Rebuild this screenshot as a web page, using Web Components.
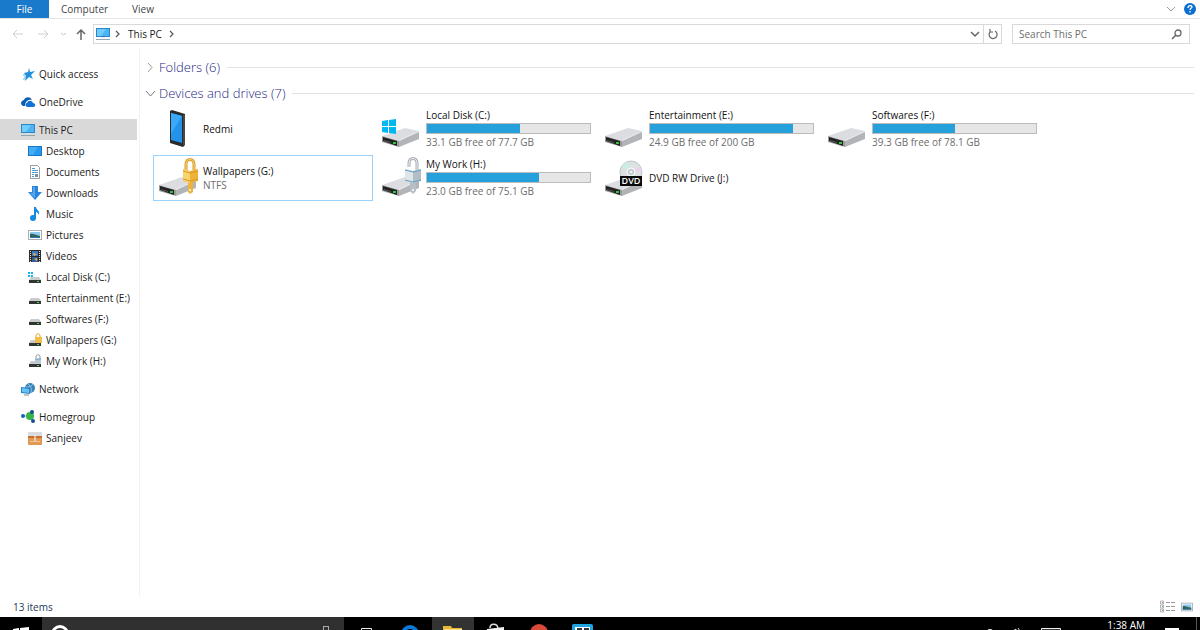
<!DOCTYPE html>
<html lang="en">
<head>
<meta charset="utf-8">
<title>This PC</title>
<style>
  body {
    margin: 0;
    font-family: "Open Sans", "Noto Sans", sans-serif;
    font-size: 10px;
    line-height: 14px;
    color: #1a1a1a;
    background: #fff;
  }
</style>
</head>
<body>
<file-explorer></file-explorer>

<script>
const drive = `
  <path d="M0 27 23 19 37 22 17 32z" fill="#dcdde0"/>
  <path d="M17 32 37 22v8L17 38z" fill="#b2b4b8"/>
  <path d="M17 31 37 22v1L17 32z" fill="#ececee"/>
  <path d="M0 27 17 32v6L0 33z" fill="#9a9b9e"/>
  <path d="M1 28 15 32v5L1 32z" fill="#222"/>
  <path d="M2 31 9 33v1L2 32z" fill="#555"/>
  <path d="M11 33h3v2h-3z" fill="#2fc43a"/>`;

const miniDrive = `
  <path d="M3 7h8l2 3H1z" fill="#c9cacd"/>
  <path d="M1 10h12v3H1z" fill="#333"/>
  <path d="M9 11h2v1H9z" fill="#3be04a"/>`;

const monitor = `
  <path d="M0 1h14v9H0z" fill="#2a86c8"/>
  <path d="M1 2h12v7H1z" fill="#4cb4f2"/>
  <path d="M1 2h9L5 9H1z" fill="#72ccfb"/>
  <path d="M5 10h4v1H5z" fill="#dfe6ea"/>
  <path d="M0 12h14v1H0z" fill="#8fa5b2"/>`;

const picture = `
  <path d="M0 2h14v10H0z" fill="#a9aeb3"/>
  <path d="M1 3h12v8H1z" fill="#fff"/>
  <path d="M2 4h10v6H2z" fill="#8cc8f0"/>
  <path d="M2 6c3-1 5 1 10 2v2H2z" fill="#2e6658"/>
  <path d="M2 9h10v1H2z" fill="#2f6eaa"/>`;

// [width, height, markup]
const icons = {
  drive: [38, 40, drive],
  system: [38, 40, drive + `
    <path d="M0 12 6 11v6H0zM7 11l7-1v7H7zM0 18h6v6l-6-1zM7 18h7v7l-7-1z" fill="#00b7f1"/>`],
  locked: [38, 40, drive + `
    <path d="M27 12V6c0-6 8-6 8 0v6" fill="none" stroke="#d99e2b" stroke-width="3"/>
    <path d="M27 12V6c0-6 8-6 8 0v6" fill="none" stroke="#fbd770" stroke-width="1"/>
    <path d="M29 23h5v11l-3 2-2-2z" fill="#edb33e"/><circle cx="31" cy="32" r="1" fill="#fff"/>
    <path d="M24 11l7 2 8-2v12l-8 2-7-2z" fill="#eeb236"/>
    <path d="M24 11l7 2v12l-7-2z" fill="#fbd36b"/>
    <path d="M24 13l7 2 8-2M24 21l7 2 8-2" fill="none" stroke="#d09a30"/>`],
  unlocked: [38, 40, drive + `
    <path d="M27 9V5c0-6 8-6 8 0v7" fill="none" stroke="#a5adb3" stroke-width="3"/>
    <path d="M27 9V5c0-6 8-6 8 0v7" fill="none" stroke="#eef1f3" stroke-width="1"/>
    <path d="M28 23h6v10l-3 3-3-3z" fill="#b6bfc6"/><circle cx="31" cy="32" r="1" fill="#fff"/>
    <path d="M23 11l8 2 8-2v12l-8 2-8-2z" fill="#b3bdc5"/>
    <path d="M23 11l8 2v12l-8-2z" fill="#dfe5e9"/>
    <path d="M23 12l8 2 8-2M23 22l8 2 8-2" fill="none" stroke="#5e9fc9"/>`],
  dvd: [38, 40, drive + `
    <circle cx="26" cy="14" r="11" fill="#dde1e2" stroke="#bfc5c7"/>
    <path d="M26 14 17 8a11 11 0 0 1 5-4z" fill="#c6efe0"/>
    <path d="M26 14 36 9a11 11 0 0 1 1 5z" fill="#e8d2ee"/>
    <circle cx="26" cy="14" r="4" fill="#c9cfd1" stroke="#fff"/><circle cx="26" cy="14" r="1" fill="#fff"/>
    <path d="M15 18h22v10H15z" fill="#0b0b0b"/>
    <text x="26" y="26" text-anchor="middle" font-size="9" font-weight="600" fill="#fff">DVD</text>`],
  phone: [38, 40, `
    <path d="M11 2 13 1 26 5v31l-2 2-13-4z" fill="#2b2b2b"/>
    <path d="M12 4 23 7v27l-11-3z" fill="#2292ea"/>
    <path d="M12 4 23 7 12 25z" fill="#3aa9f8"/>
    <path d="M25 6v30" stroke="#666"/>`],
  star: [14, 14, `
    <path d="M8 1 9 5l5-1-4 4 2 4-4-2-4 4 1-5-2-3 4-1z" fill="#1f8fe0"/>
    <path d="M2 8h2M3 10h2M2 12h2" stroke="#63b4ee"/>`],
  cloud: [14, 14, `
    <path d="M2 11a3 3 0 0 1-1-5c1-1 2-1 2-1 1-3 6-4 8 0-4-1-7 2-7 6z" fill="#0c5cb5"/>
    <path d="M6 12c-2-1-2-4 0-4 1-3 5-3 6 0 3 0 3 4 0 4z" fill="#1272d3"/>`],
  monitor: [14, 14, monitor],
  desktop: [14, 14, `<path d="M0 2h14v10H0z" fill="#1476c4"/><path d="M1 3h12v8H1z" fill="#2499ee"/><path d="M1 3h9L5 11H1z" fill="#42adf6"/>`],
  document: [14, 14, `
    <path d="M2.500.5h7l2 2v11h-9z" fill="#fff" stroke="#9a9fa3"/>
    <path d="M4 3.500h3M4 5.500h6M4 7.500h6M4 9.500h2M4 11.500h2" stroke="#4b9ad3"/><path d="M7 9h3v3H7z" fill="#7b8d99"/>`],
  download: [14, 14, `<path d="M4 0h6v6h4l-7 8-7-8h4z" fill="#2b86d9"/><path d="M5 1h2v11L2 7h3z" fill="#56a7ed"/>`],
  music: [14, 14, `<ellipse cx="5" cy="11" rx="3" ry="3" fill="#148ae2"/><path d="M6 0h2c0 3 4 3 3 8-1-2-2-3-3-3v6H6z" fill="#148ae2"/>`],
  picture: [14, 14, picture],
  video: [14, 14, `
    <path d="M1 1h12v12H1z" fill="#2b2b2b"/><path d="M4 2h6v5H4z" fill="#3b79c2"/><path d="M4 8h6v5H4z" fill="#315f94"/>
    <path d="M5 4l4 1-3 2zM6 10l3-1v3z" fill="#efb13f"/>
    <path d="M2.500 2v11M11.500 2v11" stroke="#ddd" stroke-dasharray="1 1"/>`],
  miniDrive: [14, 14, miniDrive],
  miniSystem: [14, 14, miniDrive + `<path d="M0 2h2v2H0zM3 2h2v2H3zM0 5h2v2H0zM3 5h2v2H3z" fill="#19b4ee"/>`],
  miniLocked: [14, 14, miniDrive + `<path d="M8 5V3c0-3 4-3 4 0v2" fill="none" stroke="#d9a02e"/><path d="M7 4h7v6H7z" fill="#f1bd48"/>`],
  miniUnlocked: [14, 14, miniDrive + `<path d="M8 4V3c0-3 4-3 4 0v2" fill="none" stroke="#8b959c"/><path d="M7 5h6v4H7z" fill="#b9c9d4"/><path d="M7 5h6" stroke="#5e9fc9"/>`],
  network: [14, 14, `
    <circle cx="9" cy="6" r="5" fill="#3a83b8"/><path d="M7 2c3 2 4 5 3 8M12 2c-1 2-3 3-7 3" stroke="#8cc4e6" fill="none"/>
    <path d="M0 5l9 1v6l-9-1z" fill="#2c83c4"/><path d="M1 6l7 1v4l-7-1z" fill="#63c2f6"/><path d="M3 13h5" stroke="#889"/>`],
  homegroup: [14, 14, `
    <path d="M2 6h7M9 6l2-4M9 6l2 5" stroke="#9ab"/>
    <circle cx="9" cy="6" r="4" fill="#37b34a"/><circle cx="2" cy="6" r="2" fill="#1467b3"/>
    <circle cx="11" cy="2" r="2" fill="#174f8c"/><circle cx="12" cy="11" r="2" fill="#174f8c"/>`],
  user: [14, 14, `
    <path d="M0 1h14v13H0z" fill="#e19a55"/><path d="M0 1h14v5H0z" fill="#d9dde1"/><path d="M0 5h14v2H0z" fill="#c5702c"/>
    <path d="M7 4v6" stroke="#fff"/><path d="M2 10h10v1H2z" fill="#f3c795"/>`],
  back: [11, 10, `<path d="M5 1 1 5l4 4M1 5h10" fill="none" stroke="#cfcfcf"/>`],
  forward: [11, 10, `<path d="M6 1l4 4-4 4M10 5H0" fill="none" stroke="#cfcfcf"/>`],
  up: [10, 11, `<path d="M1 5l4-4 4 4M5 1v10" fill="none" stroke="#666" stroke-width="1.500"/>`],
  history: [5, 4, `<path d="M0 1l2.500 2L5 1" fill="none" stroke="#c4c4c4"/>`],
  chevronDown: [8, 6, `<path d="M0 1l4 4 4-4" fill="none" stroke="#999"/>`],
  dropDown: [8, 6, `<path d="M0 1l4 4 4-4" fill="none" stroke="#666" stroke-width="1.500"/>`],
  crumb: [4, 6, `<path d="M0 0l3 3-3 3" fill="none" stroke="#555" stroke-width="1.200"/>`],
  expanded: [9, 9, `<path d="M0 2l4.500 5L9 2" fill="none" stroke="#777"/>`],
  collapsed: [9, 9, `<path d="M2 0l4 4.500L2 9" fill="none" stroke="#999"/>`],
  refresh: [10, 10, `<path d="M7 2a4 4 0 1 1-5 1M2 0v3h3" fill="none" stroke="#666" stroke-width="1.200"/>`],
  search: [10, 10, `<circle cx="6" cy="4" r="3" fill="none" stroke="#666" stroke-width="1.300"/><path d="M4 6 0 10" stroke="#666" stroke-width="1.600"/>`],
  help: [12, 12, `<circle cx="6" cy="6" r="6" fill="#0a6fd0"/><path d="M4 5c0-3 4-3 4-1 0 1-2 1-2 3M6 8v1.500" fill="none" stroke="#fff" stroke-width="1.300"/>`],
  details: [15, 13, `
    <path d="M.5 1h3v3h-3zM.5 5h3v3h-3zM.5 9h3v3h-3z" fill="#fff" stroke="#b4b4b4"/>
    <path d="M2 2h1v1H2z" fill="#c66"/><path d="M2 6h1v1H2z" fill="#6a6"/><path d="M2 10h1v1H2z" fill="#c66"/>
    <path d="M6 2.500h4M11 2.500h4M6 6.500h4M11 6.500h4M6 10.500h4M11 10.500h4" stroke="#999"/>`],
  windows: [16, 16, `<path d="M0 2 6 1v7H0zM7 1l9-1v8H7zM0 9h6v6l-6-1zM7 9h9v7l-9-1z" fill="#fff"/>`],
  cortana: [18, 18, `<circle cx="9" cy="9" r="7.500" fill="none" stroke="#fff" stroke-width="3"/>`],
  mic: [8, 14, `<rect x="1.500" y="1.500" width="5" height="9" fill="none" stroke="#aaa"/>`],
  taskView: [12, 12, `<path d="M.5 1.500h10v9H.5z" fill="none" stroke="#eee"/>`],
  edge: [18, 18, `<circle cx="9" cy="10" r="7" fill="none" stroke="#0c78d6" stroke-width="4"/>`],
  folder: [20, 18, `<path d="M0 2h8l1 2h10v14H0z" fill="#e9b738"/><path d="M1 5h18v13H1z" fill="#fae08b"/>`],
  store: [18, 18, `<path d="M3 4c0-5 7-5 8 0" fill="none" stroke="#ddd" stroke-width="1.500"/><path d="M0 5 17 3v15H0z" fill="#f2f2f2"/>`],
  record: [18, 18, `<circle cx="9" cy="9" r="9" fill="#d9493c"/>`],
  app: [21, 18, `<rect width="21" height="20" rx="2" fill="#1ea5df"/><path d="M3 3h15v15H3z" fill="#fff"/><path d="M5 4h5v4H5zM12 4h5v4h-5z" fill="#333"/>`],
  people: [6, 8, `<circle cx="3" cy="4" r="3" fill="#eee"/>`],
  battery: [21, 10, `<path d="M.5.5h19v9H.5z" fill="#333" stroke="#eee"/>`],
  notice: [14, 12, `<path d="M0 0h14v10H0z" fill="#fff"/>`],
  sound: [8, 8, `<path d="M5 0l2 3M0 3l3-2v6z" stroke="#ccc" fill="#ccc"/>`]
};

function define(name, markup, setup) {
  const template = document.createElement("template");
  template.innerHTML = markup;
  customElements.define(name, class extends HTMLElement {
    constructor() {
      super();
      this.attachShadow({ mode: "open" });
      this.shadowRoot.appendChild(template.content.cloneNode(true));
    }

    connectedCallback() {
      if (setup) setup(this, this.shadowRoot);
    }
  });
}

function addIcon(el, root) {
  const icon = document.createElement("app-icon");
  icon.setAttribute("name", el.getAttribute("icon"));
  root.querySelector("a").prepend(icon);
}

define("app-icon", `
  <style>
    :host { display: block; flex: none; line-height: 0; }
    svg { display: block; overflow: visible; }
  </style>
`, (el, root) => {
  const [w, h, art] = icons[el.getAttribute("name")];
  const size = Number(el.getAttribute("width")) || w;
  root.innerHTML += `<svg width="${size}" height="${Math.round(h * size / w)}" viewBox="0 0 ${w} ${h}" aria-hidden="true">${art}</svg>`;
});

define("ribbon-tabs", `
  <style>
    :host { display: flex; align-items: center; height: 18px; flex: none; border-bottom: 1px solid #e4e5e6; }
    button { border: 0; background: none; font: inherit; color: #444; height: 18px; padding: 0 12px; }
    .file { background: #1979ca; color: #fff; width: 49px; }
    .end { margin-left: auto; display: flex; align-items: center; gap: 9px; padding-right: 4px; }
    .end button { padding: 0; }
  </style>
  <button class="file">File</button>
  <button>Computer</button>
  <button>View</button>
  <div class="end">
    <button aria-label="Expand the ribbon"><app-icon name="chevronDown"></app-icon></button>
    <button aria-label="Help"><app-icon name="help"></app-icon></button>
  </div>
`);

define("address-bar", `
  <style>
    :host { display: flex; align-items: center; flex: none; height: 30px; padding: 0 10px 0 12px; }
    button { border: 0; background: none; padding: 0; font: inherit; color: inherit; }
    .nav { display: flex; align-items: center; gap: 15px; width: 81px; }
    .nav button:nth-child(3) { margin: 0 -5px 0 -3px; }
    .path, .search { box-sizing: border-box; height: 20px; border: 1px solid #d9d9d9; display: flex; align-items: center; }
    .path { flex: 1; padding-left: 2px; }
    .crumbs { display: flex; align-items: center; gap: 8px; margin-left: 6px; }
    .drop { margin-left: auto; padding-right: 4px; }
    .refresh { border-left: 1px solid #d9d9d9; width: 18px; height: 18px; display: grid; place-items: center; }
    .search { width: 178px; margin-left: 10px; padding: 0 7px 0 6px; }
    input { flex: 1; min-width: 0; border: 0; outline: 0; padding: 0; font: inherit; background: none; }
    input::placeholder { color: #6d6d6d; opacity: 1; }
  </style>
  <div class="nav">
    <button aria-label="Back"><app-icon name="back"></app-icon></button>
    <button aria-label="Forward"><app-icon name="forward"></app-icon></button>
    <button aria-label="Recent locations"><app-icon name="history"></app-icon></button>
    <button aria-label="Up"><app-icon name="up"></app-icon></button>
  </div>
  <div class="path">
    <app-icon name="monitor"></app-icon>
    <div class="crumbs">
      <app-icon name="crumb"></app-icon>
      <button><slot></slot></button>
      <app-icon name="crumb"></app-icon>
    </div>
    <button class="drop" aria-label="Previous locations"><app-icon name="dropDown"></app-icon></button>
    <button class="refresh" aria-label="Refresh"><app-icon name="refresh"></app-icon></button>
  </div>
  <div class="search">
    <input type="search" placeholder="Search This PC" aria-label="Search This PC">
    <app-icon name="search"></app-icon>
  </div>
`);

define("nav-item", `
  <style>
    :host { display: block; }
    :host([top]) { margin-top: 7px; }
    a { display: flex; align-items: center; gap: 4px; height: 21px; padding-left: 28px; color: inherit; text-decoration: none; white-space: nowrap; }
    :host([top]) a { padding-left: 21px; }
    :host([current]) a { background: #d9d9d9; }
  </style>
  <a href="#"><span><slot></slot></span></a>
`, addIcon);

define("nav-pane", `
  <style>
    :host { display: block; box-sizing: border-box; width: 140px; flex: none; padding: 7px 2px 0 0; border-right: 1px solid #f2f2f2; }
  </style>
  <nav><slot></slot></nav>
`);

define("item-group", `
  <style>
    :host { display: block; }
    button { display: flex; align-items: center; gap: 4px; width: 100%; height: 26px; padding: 0; border: 0; background: none;
      font: inherit; font-size: 13px; font-weight: 300; color: #1e287f; white-space: nowrap; }
    button::after { content: ""; flex: 1; height: 1px; margin-left: 3px; background: #e2e2e2; }
    .items { display: grid; grid-template-columns: repeat(auto-fill, 220px); gap: 3px; padding-left: 7px; }
    :host([collapsed]) .items { display: none; }
  </style>
  <button></button>
  <div class="items"><slot></slot></div>
`, (el, root) => {
  const closed = el.hasAttribute("collapsed");
  const head = root.querySelector("button");
  head.setAttribute("aria-expanded", !closed);
  head.innerHTML = `<app-icon name="${closed ? "collapsed" : "expanded"}"></app-icon><span>${el.getAttribute("label")}</span>`;
});

define("drive-tile", `
  <style>
    :host { display: block; }
    a { box-sizing: border-box; display: flex; align-items: center; gap: 6px; height: 46px; padding: 0 4px 0 5px;
      border: 1px solid transparent; color: #111; text-decoration: none; }
    :host([selected]) a { border-color: #99d1ff; }
    .info { flex: 1; }
    :host([used]) .info { padding-bottom: 2px; }
    .bar { box-sizing: border-box; height: 11px; width: 165px; margin: 1px 0; border: 1px solid #bcbcbc; background: #e6e6e6; }
    .fill { height: 100%; background: #26a0da; }
    .note { color: #6d6d6d; }
  </style>
  <a href="#"><div class="info"><div><slot></slot></div></div></a>
`, (el, root) => {
  addIcon(el, root);
  const info = root.querySelector(".info");
  const used = el.getAttribute("used");
  if (used) {
    info.insertAdjacentHTML("beforeend", `<div class="bar" role="meter" aria-label="Space used" aria-valuenow="${used}"><div class="fill" style="width: ${used}%"></div></div>`);
  }
  if (el.hasAttribute("note")) {
    info.insertAdjacentHTML("beforeend", `<div class="note">${el.getAttribute("note")}</div>`);
  }
});

define("status-bar", `
  <style>
    :host { display: flex; align-items: center; flex: none; height: 21px; padding: 0 7px 0 13px; color: #1e395b; }
    .views { margin-left: auto; display: flex; align-items: center; gap: 6px; }
    button { border: 0; background: none; padding: 0; }
  </style>
  <span><slot></slot></span>
  <div class="views">
    <button aria-label="Details"><app-icon name="details"></app-icon></button>
    <button aria-label="Large icons"><app-icon name="picture" width="12"></app-icon></button>
  </div>
`);

define("task-bar", `
  <style>
    :host { display: flex; flex: none; height: 13px; overflow: hidden; background: #000; color: #fff; }
    button { display: flex; justify-content: center; border: 0; padding: 7px 0 0; width: 42px; height: 40px; background: none; font: inherit; color: inherit; }
    .search { justify-content: space-between; width: 302px; padding: 8px 14px 0 9px; background: #303030; }
    .apps { display: flex; gap: 1px; margin-left: 2px; }
    .open { background: #333; }
    .low { padding-top: 10px; }
    .tray { display: flex; margin-left: auto; gap: 20px; }
    .tray button { width: auto; padding-top: 11px; }
    .tray .clock { display: block; height: 13px; padding-top: 3px; margin: 0 0 0 25px; line-height: 10px; }
    .edge { width: 3px; border-left: 1px solid #555; margin-left: -3px; }
  </style>
  <button class="low" aria-label="Start"><app-icon name="windows"></app-icon></button>
  <button class="search" aria-label="Search"><app-icon name="cortana"></app-icon><app-icon name="mic"></app-icon></button>
  <div class="apps">
    <button class="low" aria-label="Task view"><app-icon name="taskView"></app-icon></button>
    <button aria-label="Edge"><app-icon name="edge"></app-icon></button>
    <button class="open" aria-label="File Explorer"><app-icon name="folder"></app-icon></button>
    <button aria-label="Store"><app-icon name="store"></app-icon></button>
    <button aria-label="Recorder"><app-icon name="record"></app-icon></button>
    <button aria-label="App"><app-icon name="app"></app-icon></button>
  </div>
  <div class="tray">
    <button aria-label="People"><app-icon name="people"></app-icon></button>
    <button aria-label="Volume"><app-icon name="sound"></app-icon></button>
    <button aria-label="Battery"><app-icon name="battery"></app-icon></button>
    <button class="clock"><slot></slot></button>
    <button aria-label="Notifications"><app-icon name="notice"></app-icon></button>
    <div class="edge"></div>
  </div>
`);

define("file-explorer", `
  <style>
    :host { display: flex; flex-direction: column; height: 100vh; overflow: hidden; }
    .body { display: flex; flex: 1; min-height: 0; }
    main { flex: 1; min-width: 0; padding: 5px 6px 0; }
  </style>
  <ribbon-tabs></ribbon-tabs>
  <address-bar>This PC</address-bar>
  <div class="body">
    <nav-pane>
      <nav-item top icon="star">Quick access</nav-item>
      <nav-item top icon="cloud">OneDrive</nav-item>
      <nav-item top current icon="monitor">This PC</nav-item>
      <nav-item icon="desktop">Desktop</nav-item>
      <nav-item icon="document">Documents</nav-item>
      <nav-item icon="download">Downloads</nav-item>
      <nav-item icon="music">Music</nav-item>
      <nav-item icon="picture">Pictures</nav-item>
      <nav-item icon="video">Videos</nav-item>
      <nav-item icon="miniSystem">Local Disk (C:)</nav-item>
      <nav-item icon="miniDrive">Entertainment (E:)</nav-item>
      <nav-item icon="miniDrive">Softwares (F:)</nav-item>
      <nav-item icon="miniLocked">Wallpapers (G:)</nav-item>
      <nav-item icon="miniUnlocked">My Work (H:)</nav-item>
      <nav-item top icon="network">Network</nav-item>
      <nav-item top icon="homegroup">Homegroup</nav-item>
      <nav-item icon="user">Sanjeev</nav-item>
    </nav-pane>
    <main>
      <item-group label="Folders (6)" collapsed></item-group>
      <item-group label="Devices and drives (7)">
        <drive-tile icon="phone">Redmi</drive-tile>
        <drive-tile icon="system" used="57" note="33.1 GB free of 77.7 GB">Local Disk (C:)</drive-tile>
        <drive-tile icon="drive" used="88" note="24.9 GB free of 200 GB">Entertainment (E:)</drive-tile>
        <drive-tile icon="drive" used="50" note="39.3 GB free of 78.1 GB">Softwares (F:)</drive-tile>
        <drive-tile icon="locked" note="NTFS" selected>Wallpapers (G:)</drive-tile>
        <drive-tile icon="unlocked" used="69" note="23.0 GB free of 75.1 GB">My Work (H:)</drive-tile>
        <drive-tile icon="dvd">DVD RW Drive (J:)</drive-tile>
      </item-group>
    </main>
  </div>
  <status-bar>13 items</status-bar>
  <task-bar>1:38 AM</task-bar>
`);
</script>
</body>
</html>
